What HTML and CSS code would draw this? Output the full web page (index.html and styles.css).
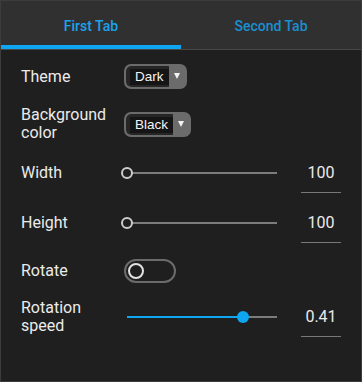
FILE: index.html
```html
<!DOCTYPE html>
<html lang="en">
<head>
    <meta charset="UTF-8">
    <meta name="viewport" content="width=device-width, initial-scale=1.0">
    <title>Settings</title>
    <link rel="stylesheet" href="styles.css">
</head>
<body>
    <div class="panel">
        <div class="tabs">
            <div class="tab active">First Tab</div>
            <div class="tab">Second Tab</div>
        </div>

        <div class="content">
            <div class="row">
                <div class="label">Theme</div>
                <div class="select">
                    <span class="select-value"><span class="select-text">Dark</span></span>
                    <span class="select-arrow"></span>
                </div>
            </div>

            <div class="row double">
                <div class="label">Background<br>color</div>
                <div class="select">
                    <span class="select-value"><span class="select-text">Black</span></span>
                    <span class="select-arrow"></span>
                </div>
            </div>

            <div class="row tall">
                <div class="label">Width</div>
                <div class="slider">
                    <div class="track">
                        <span class="thumb" style="left: 0%"></span>
                    </div>
                </div>
                <div class="value">100</div>
            </div>

            <div class="row tall">
                <div class="label">Height</div>
                <div class="slider">
                    <div class="track">
                        <span class="thumb" style="left: 0%"></span>
                    </div>
                </div>
                <div class="value">100</div>
            </div>

            <div class="row short">
                <div class="label">Rotate</div>
                <div class="toggle"><span class="knob"></span></div>
            </div>

            <div class="row short">
                <div class="label">Rotation<br>speed</div>
                <div class="slider">
                    <div class="track">
                        <div class="track-fill" style="width: 77.3%"></div>
                        <span class="thumb on" style="left: 77.3%"></span>
                    </div>
                </div>
                <div class="value">0.41</div>
            </div>
        </div>
    </div>
</body>
</html>
```

FILE: styles.css
```css
body {
    margin: 0;
    background: #1f1f1f;
    font-family: Roboto, 'Liberation Sans', sans-serif;
    color: #ebebeb;
}
.panel {
    width: 362px;
    height: 382px;
    box-sizing: border-box;
    border: 1px solid #3c3c3c;
    background: #1f1f1f;
}
.tabs {
    display: flex;
    background: #303030;
    border-bottom: 1px solid #474747;
}
.tab {
    flex: 1;
    text-align: center;
    font-size: 14px;
    font-weight: 500;
    color: #1a8fd1;
    padding-top: 6px;
    line-height: 38px;
    border-bottom: 4px solid transparent;
}
.tab.active {
    color: #1ba2ec;
    border-bottom-color: #0ea5f1;
}
.content {
    padding: 3px 20px 0;
}
.row {
    display: grid;
    grid-template-columns: 103px 1fr 40px;
    align-items: center;
    height: 47px;
}
.row.double { height: 48px; }
.row.tall { height: 50px; }
.row.short { height: 46px; }
.label {
    font-size: 16px;
    line-height: 18px;
}
.select {
    grid-column: 2 / 4;
    justify-self: start;
    display: inline-flex;
    height: 25px;
    box-sizing: border-box;
    border: 2px solid #6b6b6b;
    border-radius: 7px;
    background: #6b6b6b;
    overflow: hidden;
}
.select-value {
    background: #262626;
    padding: 3px 0 2px 4px;
    border-radius: 5px 0 0 5px;
}
.select-text {
    display: block;
    background: #151515;
    padding: 0 5px;
    height: 16px;
    line-height: 16px;
    font-family: 'Liberation Sans', Arial, sans-serif;
    font-size: 13.5px;
    color: #f4f4f4;
}
.select-arrow {
    width: 16px;
    display: flex;
    align-items: center;
    justify-content: center;
}
.select-arrow::after {
    content: "";
    border-left: 3.5px solid transparent;
    border-right: 3.5px solid transparent;
    border-top: 6px solid #f4f4f4;
    margin-top: -1px;
}
.slider {
    padding: 0 24px 0 3px;
}
.track {
    position: relative;
    height: 2px;
    background: #7c7c7c;
}
.track-fill {
    height: 100%;
    background: #0ea5f1;
}
.thumb {
    position: absolute;
    top: 1px;
    width: 12px;
    height: 12px;
    box-sizing: border-box;
    border: 2px solid #cdcdcd;
    border-radius: 50%;
    background: #1f1f1f;
    transform: translate(-50%, -50%);
}
.thumb.on {
    border: none;
    background: #0ea5f1;
}
.value {
    height: 40px;
    box-sizing: border-box;
    border-bottom: 1px solid #787878;
    line-height: 39px;
    text-align: center;
    font-size: 16px;
}
.toggle {
    grid-column: 2 / 4;
    justify-self: start;
    width: 52px;
    height: 24px;
    box-sizing: border-box;
    border: 2px solid #6b6b6b;
    border-radius: 12px;
    display: flex;
    align-items: center;
    padding-left: 2px;
}
.knob {
    width: 16px;
    height: 16px;
    box-sizing: border-box;
    border: 2px solid #e2e2e2;
    border-radius: 50%;
}
```
